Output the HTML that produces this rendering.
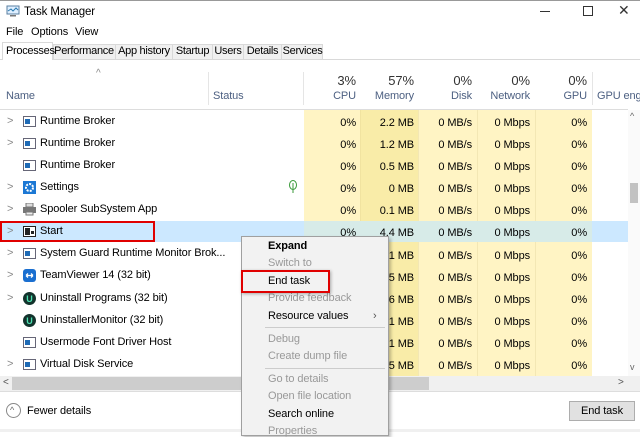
<!DOCTYPE html>
<html><head><meta charset="utf-8"><style>
*{margin:0;padding:0;box-sizing:border-box}
body{width:640px;height:432px;overflow:hidden;background:#fff;font-family:"Liberation Sans",sans-serif;font-size:11px;color:#000;position:relative;letter-spacing:-0.1px}
.a{position:absolute;white-space:nowrap}
.r{text-align:right}
.g{color:#999}
.col{position:absolute;top:110px;height:266px}
.row{position:absolute;left:0;width:628px;height:22px}
.ic{position:absolute;left:23px;width:13px;height:11px}
.chev{position:absolute;left:7px;color:#888;font-size:11px}
.tab{position:absolute;top:45px;height:14px;text-align:center;overflow:hidden;letter-spacing:-0.3px;border-left:1px solid #d9d9d9}
</style></head><body>
<div class="a" style="left:0;top:0;width:640px;height:1px;background:#999"></div>
<svg class="a" style="left:6px;top:5px" width="14" height="12"><rect x="1" y="1" width="12" height="8" fill="#dfefff" stroke="#5a7fa0"/><path d="M2 6l3-2 2 2 3-3 2 2" stroke="#2a7ab0" fill="none"/><rect x="4" y="10" width="6" height="1.5" fill="#777"/></svg>
<div class="a" style="left:24px;top:6px;font-size:11.5px">Task Manager</div>
<div class="a" style="left:540px;top:11px;width:10px;height:1px;background:#333"></div>
<div class="a" style="left:583px;top:6px;width:10px;height:10px;border:1px solid #333"></div>
<div class="a" style="left:618px;top:2px;font-size:14px;color:#333">✕</div>
<div class="a" style="left:6px;top:26px">File</div>
<div class="a" style="left:31px;top:26px">Options</div>
<div class="a" style="left:75px;top:26px">View</div>
<div class="a" style="left:0;top:59px;width:640px;height:1px;background:#d9d9d9"></div>
<div class="a" style="left:2px;top:42px;width:51px;height:18px;background:#fff;border:1px solid #d9d9d9;border-bottom:none"></div>
<div class="a" style="left:53px;top:44px;width:270px;height:15px;background:#f0f0f0;border:1px solid #d9d9d9;border-bottom:none"></div>
<div class="a" style="left:6px;top:45px;letter-spacing:-0.3px">Processes</div>
<div class="tab" style="left:53px;width:62px;border-left:none">Performance</div>
<div class="tab" style="left:115px;width:57px">App history</div>
<div class="tab" style="left:172px;width:40px">Startup</div>
<div class="tab" style="left:212px;width:31px">Users</div>
<div class="tab" style="left:243px;width:38px">Details</div>
<div class="tab" style="left:281px;width:42px">Services</div>
<div class="a" style="left:96px;top:68px;color:#888;font-size:10px">^</div>
<div class="a" style="left:208px;top:72px;width:1px;height:33px;background:#e5e5e5"></div>
<div class="a" style="left:303px;top:72px;width:1px;height:33px;background:#e5e5e5"></div>
<div class="a" style="left:592px;top:72px;width:1px;height:33px;background:#e5e5e5"></div>
<div class="a" style="left:6px;top:90px;color:#4d6082">Name</div>
<div class="a" style="left:213px;top:90px;color:#4d6082">Status</div>
<div class="a r" style="left:304px;width:52px;top:73px;font-size:13px;color:#333">3%</div>
<div class="a r" style="left:304px;width:52px;top:90px;color:#4d6082">CPU</div>
<div class="a r" style="left:360px;width:54px;top:73px;font-size:13px;color:#333">57%</div>
<div class="a r" style="left:360px;width:54px;top:90px;color:#4d6082">Memory</div>
<div class="a r" style="left:418px;width:54px;top:73px;font-size:13px;color:#333">0%</div>
<div class="a r" style="left:418px;width:54px;top:90px;color:#4d6082">Disk</div>
<div class="a r" style="left:477px;width:53px;top:73px;font-size:13px;color:#333">0%</div>
<div class="a r" style="left:477px;width:53px;top:90px;color:#4d6082">Network</div>
<div class="a r" style="left:535px;width:52px;top:73px;font-size:13px;color:#333">0%</div>
<div class="a r" style="left:535px;width:52px;top:90px;color:#4d6082">GPU</div>
<div class="a" style="left:597px;top:90px;color:#4d6082">GPU engir</div>
<div class="a" style="left:0;top:109px;width:628px;height:1px;background:#ddd"></div>
<div class="col" style="left:304px;width:56px;background:#fff4c4"></div>
<div class="col" style="left:360px;width:58px;background:#f9eca8;border-left:1px solid #f1e3a0"></div>
<div class="col" style="left:418px;width:59px;background:#fff4c4;border-left:1px solid #f3e7b4"></div>
<div class="col" style="left:477px;width:58px;background:#fff4c4;border-left:1px solid #f3e7b4"></div>
<div class="col" style="left:535px;width:57px;background:#fff4c4;border-left:1px solid #f3e7b4"></div>
<div class="a" style="left:0;top:221px;width:628px;height:21px;background:#cce8ff"></div>
<div class="a" style="left:304px;top:221px;width:288px;height:21px;background:#d7ebe8"></div>
<div class="row" style="top:110px"><span class="chev" style="top:5px">&gt;</span><svg class="ic" style="top:6px"><rect x=".5" y=".5" width="12" height="10" fill="#fff" stroke="#667"/><rect x="2" y="3" width="5" height="5" fill="#1e6ab5"/></svg><span class="a" style="left:40px;top:5px">Runtime Broker</span></div>
<div class="row" style="top:132px"><span class="chev" style="top:5px">&gt;</span><svg class="ic" style="top:6px"><rect x=".5" y=".5" width="12" height="10" fill="#fff" stroke="#667"/><rect x="2" y="3" width="5" height="5" fill="#1e6ab5"/></svg><span class="a" style="left:40px;top:5px">Runtime Broker</span></div>
<div class="row" style="top:154px"><svg class="ic" style="top:6px"><rect x=".5" y=".5" width="12" height="10" fill="#fff" stroke="#667"/><rect x="2" y="3" width="5" height="5" fill="#1e6ab5"/></svg><span class="a" style="left:40px;top:5px">Runtime Broker</span></div>
<div class="row" style="top:176px"><span class="chev" style="top:5px">&gt;</span><svg class="ic" style="top:5px;height:13px"><rect width="13" height="13" fill="#1c78d4"/><circle cx="6.5" cy="6.5" r="3.5" fill="none" stroke="#fff" stroke-width="2" stroke-dasharray="2 1.2"/></svg><span class="a" style="left:40px;top:5px">Settings</span><svg class="a" style="left:288px;top:4px" width="10" height="14"><ellipse cx="5" cy="5" rx="3.5" ry="4.5" fill="none" stroke="#3a9a3a"/><path d="M5 3v10" stroke="#3a9a3a"/></svg></div>
<div class="row" style="top:198px"><span class="chev" style="top:5px">&gt;</span><svg class="ic" style="top:5px;height:13px"><rect x="3" y="0" width="7" height="4" fill="#ddd" stroke="#777"/><rect x="0" y="4" width="13" height="6" fill="#777"/><rect x="3" y="9" width="7" height="3" fill="#eee" stroke="#777"/></svg><span class="a" style="left:40px;top:5px">Spooler SubSystem App</span></div>
<div class="row" style="top:220px"><span class="chev" style="top:5px">&gt;</span><svg class="ic" style="top:6px"><rect x=".5" y=".5" width="12" height="10" fill="#fff" stroke="#222"/><rect x="2" y="2" width="5" height="7" fill="#222"/><rect x="8" y="5" width="3" height="3" fill="#222"/></svg><span class="a" style="left:40px;top:5px">Start</span></div>
<div class="row" style="top:242px"><span class="chev" style="top:5px">&gt;</span><svg class="ic" style="top:6px"><rect x=".5" y=".5" width="12" height="10" fill="#fff" stroke="#667"/><rect x="2" y="3" width="5" height="5" fill="#1e6ab5"/></svg><span class="a" style="left:40px;top:5px">System Guard Runtime Monitor Brok...</span></div>
<div class="row" style="top:264px"><span class="chev" style="top:5px">&gt;</span><svg class="ic" style="top:5px;height:13px"><rect width="13" height="13" rx="3" fill="#1a6fd0"/><path d="M3 6.5h7M3 6.5l2-2M3 6.5l2 2M10 6.5l-2-2M10 6.5l-2 2" stroke="#fff" stroke-width="1.3"/></svg><span class="a" style="left:40px;top:5px">TeamViewer 14 (32 bit)</span></div>
<div class="row" style="top:287px"><span class="chev" style="top:5px">&gt;</span><svg class="ic" style="top:5px;height:13px"><circle cx="6.5" cy="6.5" r="6.5" fill="#12332c"/><text x="6.5" y="10" font-size="9" fill="#4de0b0" text-anchor="middle" font-family="Liberation Sans" font-weight="bold">U</text></svg><span class="a" style="left:40px;top:5px">Uninstall Programs (32 bit)</span></div>
<div class="row" style="top:309px"><svg class="ic" style="top:5px;height:13px"><circle cx="6.5" cy="6.5" r="6.5" fill="#12332c"/><text x="6.5" y="10" font-size="9" fill="#4de0b0" text-anchor="middle" font-family="Liberation Sans" font-weight="bold">U</text></svg><span class="a" style="left:40px;top:5px">UninstallerMonitor (32 bit)</span></div>
<div class="row" style="top:331px"><svg class="ic" style="top:6px"><rect x=".5" y=".5" width="12" height="10" fill="#fff" stroke="#667"/><rect x="2" y="3" width="5" height="5" fill="#1e6ab5"/></svg><span class="a" style="left:40px;top:5px">Usermode Font Driver Host</span></div>
<div class="row" style="top:353px"><span class="chev" style="top:5px">&gt;</span><svg class="ic" style="top:6px"><rect x=".5" y=".5" width="12" height="10" fill="#fff" stroke="#667"/><rect x="2" y="3" width="5" height="5" fill="#1e6ab5"/></svg><span class="a" style="left:40px;top:5px">Virtual Disk Service</span></div>
<div class="a r" style="left:304px;width:52px;top:112px;line-height:22.1px">0%<br>0%<br>0%<br>0%<br>0%<br>0%<br></div>
<div class="a r" style="left:360px;width:54px;top:112px;line-height:22.1px">2.2 MB<br>1.2 MB<br>0.5 MB<br>0 MB<br>0.1 MB<br>4.4 MB<br>2.1 MB<br>0.5 MB<br>0.6 MB<br>4.1 MB<br>0.1 MB<br>0.5 MB</div>
<div class="a r" style="left:418px;width:54px;top:112px;line-height:22.1px">0 MB/s<br>0 MB/s<br>0 MB/s<br>0 MB/s<br>0 MB/s<br>0 MB/s<br>0 MB/s<br>0 MB/s<br>0 MB/s<br>0 MB/s<br>0 MB/s<br>0 MB/s</div>
<div class="a r" style="left:477px;width:53px;top:112px;line-height:22.1px">0 Mbps<br>0 Mbps<br>0 Mbps<br>0 Mbps<br>0 Mbps<br>0 Mbps<br>0 Mbps<br>0 Mbps<br>0 Mbps<br>0 Mbps<br>0 Mbps<br>0 Mbps</div>
<div class="a r" style="left:535px;width:52px;top:112px;line-height:22.1px">0%<br>0%<br>0%<br>0%<br>0%<br>0%<br>0%<br>0%<br>0%<br>0%<br>0%<br>0%</div>
<div class="a" style="left:628px;top:110px;width:12px;height:266px;background:#fafafa"></div>
<div class="a" style="left:630px;top:111px;font-size:9px;color:#666">^</div>
<div class="a" style="left:630px;top:183px;width:8px;height:20px;background:#c2c2c2"></div>
<div class="a" style="left:630px;top:362px;font-size:9px;color:#666">v</div>
<div class="a" style="left:0;top:376px;width:640px;height:16px;background:#f0f0f0;border-bottom:1px solid #ddd"></div>
<div class="a" style="left:12px;top:377px;width:417px;height:13px;background:#cdcdcd"></div>
<div class="a" style="left:3px;top:377px;font-size:10px;color:#555">&lt;</div>
<div class="a" style="left:618px;top:377px;font-size:10px;color:#555">&gt;</div>
<div class="a" style="left:6px;top:403px;width:15px;height:15px;border:1px solid #888;border-radius:50%"></div>
<div class="a" style="left:10px;top:405px;font-size:9px;color:#666">^</div>
<div class="a" style="left:27px;top:405px">Fewer details</div>
<div class="a" style="left:569px;top:401px;width:66px;height:20px;background:#e1e1e1;border:1px solid #adadad;text-align:center;line-height:18px">End task</div>
<div class="a" style="left:0;top:429px;width:640px;height:3px;background:#f0f0f0"></div>
<div class="a" style="left:0;top:221px;width:155px;height:21px;border:2px solid #e00000"></div>
<div class="a" style="left:241px;top:236px;width:148px;height:200px;background:#f2f2f2;border:1px solid #a0a0a0;box-shadow:2px 2px 3px rgba(0,0,0,.25)"></div>
<div class="a" style="left:268px;top:240px;font-weight:bold">Expand</div>
<div class="a g" style="left:268px;top:257px">Switch to</div>
<div class="a" style="left:268px;top:275px">End task</div>
<div class="a g" style="left:268px;top:292px">Provide feedback</div>
<div class="a" style="left:268px;top:310px">Resource values</div>
<div class="a" style="left:373px;top:310px;color:#555">›</div>
<div class="a" style="left:265px;top:327px;width:120px;height:1px;background:#ccc"></div>
<div class="a g" style="left:268px;top:333px">Debug</div>
<div class="a g" style="left:268px;top:350px">Create dump file</div>
<div class="a" style="left:265px;top:368px;width:120px;height:1px;background:#ccc"></div>
<div class="a g" style="left:268px;top:373px">Go to details</div>
<div class="a g" style="left:268px;top:390px">Open file location</div>
<div class="a" style="left:268px;top:408px">Search online</div>
<div class="a g" style="left:268px;top:425px">Properties</div>
<div class="a" style="left:241px;top:270px;width:89px;height:23px;border:2px solid #e00000;box-shadow:1px 1px 3px rgba(0,0,0,.3)"></div>
</body></html>
